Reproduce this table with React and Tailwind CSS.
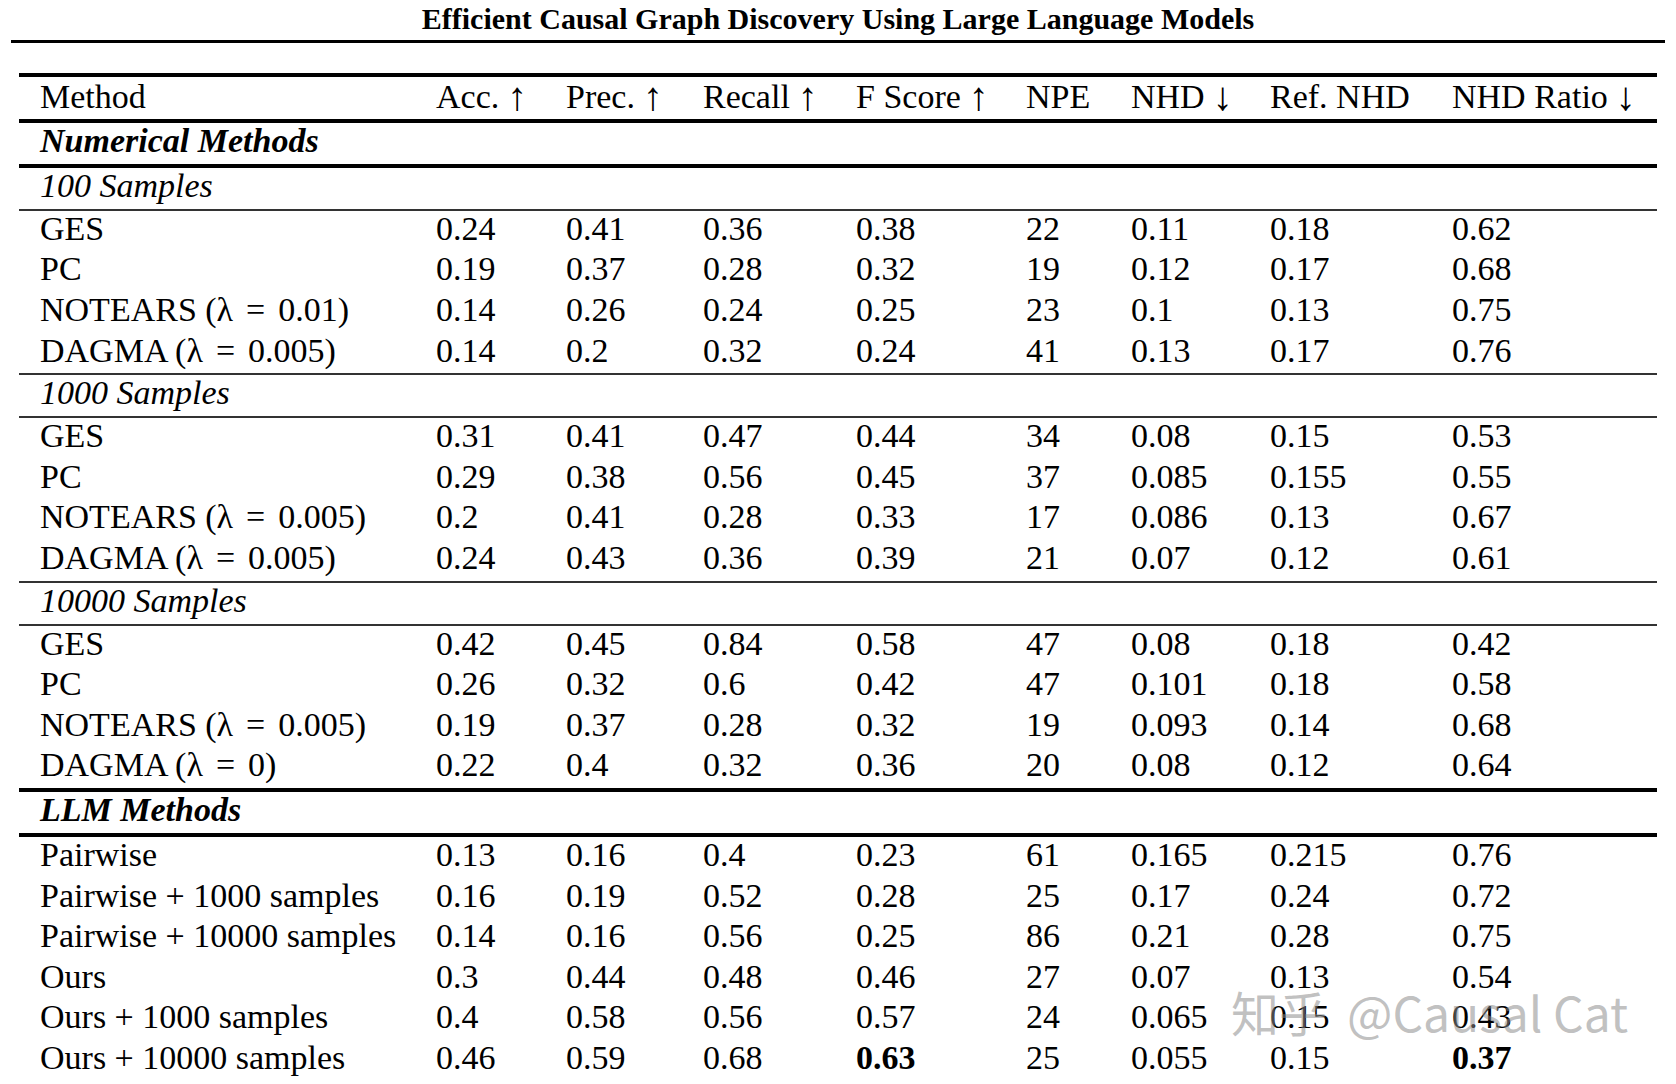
import React from 'react';

const COLS = 'grid grid-cols-[396px_130px_137px_153px_170px_105px_139px_182px_223px]';

const UP = '↑';
const DOWN = '↓';
const HEAD = [
  ['Method'], ['Acc.', UP], ['Prec.', UP], ['Recall', UP], ['F Score', UP],
  ['NPE'], ['NHD', DOWN], ['Ref. NHD'], ['NHD Ratio', DOWN],
];

const lam = (name, v) => (
  <>
    {name} (λ<span className="mx-[13px]">=</span>{v})
  </>
);

const GROUPS = [
  {
    title: '100 Samples',
    rows: [
      ['GES', '0.24', '0.41', '0.36', '0.38', '22', '0.11', '0.18', '0.62'],
      ['PC', '0.19', '0.37', '0.28', '0.32', '19', '0.12', '0.17', '0.68'],
      [lam('NOTEARS', '0.01'), '0.14', '0.26', '0.24', '0.25', '23', '0.1', '0.13', '0.75'],
      [lam('DAGMA', '0.005'), '0.14', '0.2', '0.32', '0.24', '41', '0.13', '0.17', '0.76'],
    ],
  },
  {
    title: '1000 Samples',
    rows: [
      ['GES', '0.31', '0.41', '0.47', '0.44', '34', '0.08', '0.15', '0.53'],
      ['PC', '0.29', '0.38', '0.56', '0.45', '37', '0.085', '0.155', '0.55'],
      [lam('NOTEARS', '0.005'), '0.2', '0.41', '0.28', '0.33', '17', '0.086', '0.13', '0.67'],
      [lam('DAGMA', '0.005'), '0.24', '0.43', '0.36', '0.39', '21', '0.07', '0.12', '0.61'],
    ],
  },
  {
    title: '10000 Samples',
    rows: [
      ['GES', '0.42', '0.45', '0.84', '0.58', '47', '0.08', '0.18', '0.42'],
      ['PC', '0.26', '0.32', '0.6', '0.42', '47', '0.101', '0.18', '0.58'],
      [lam('NOTEARS', '0.005'), '0.19', '0.37', '0.28', '0.32', '19', '0.093', '0.14', '0.68'],
      [lam('DAGMA', '0'), '0.22', '0.4', '0.32', '0.36', '20', '0.08', '0.12', '0.64'],
    ],
  },
];

const LLM = [
  ['Pairwise', '0.13', '0.16', '0.4', '0.23', '61', '0.165', '0.215', '0.76'],
  ['Pairwise + 1000 samples', '0.16', '0.19', '0.52', '0.28', '25', '0.17', '0.24', '0.72'],
  ['Pairwise + 10000 samples', '0.14', '0.16', '0.56', '0.25', '86', '0.21', '0.28', '0.75'],
  ['Ours', '0.3', '0.44', '0.48', '0.46', '27', '0.07', '0.13', '0.54'],
  ['Ours + 1000 samples', '0.4', '0.58', '0.56', '0.57', '24', '0.065', '0.15', '0.43'],
  ['Ours + 10000 samples', '0.46', '0.59', '0.68', '0.63', '25', '0.055', '0.15', '0.37'],
];

// best results, set in bold
const BOLD = { 'l5-4': true, 'l5-8': true };

function Row({ cells, rowKey }) {
  return (
    <div className={`${COLS} h-[40.6px] items-center pb-[5px]`}>
      {cells.map((c, i) => (
        <div key={i} className={`pl-[21px] whitespace-nowrap ${BOLD[`${rowKey}-${i}`] ? 'font-bold' : ''}`}>
          {c}
        </div>
      ))}
    </div>
  );
}

function Caption({ children, bold }) {
  return (
    <div className={`h-[41px] flex items-center pb-[5px] pl-[21px] italic ${bold ? 'font-bold' : ''}`}>{children}</div>
  );
}

export default function App() {
  return (
    <div className="relative w-[1676px] h-[1084px] overflow-hidden bg-white text-black font-['Liberation_Serif','Times_New_Roman',serif]">
      <div className="h-[40px] flex items-center justify-center pb-[2px] text-[30px] font-bold leading-none">
        Efficient Causal Graph Discovery Using Large Language Models
      </div>
      <div className="mx-[11px] border-t-[3px] border-black" />

      <div className="mx-[19px] mt-[30px] text-[34px] leading-none">
        <div className="border-t-4 border-black" />
        <div className={`${COLS} h-[42px] items-center pb-[5px]`}>
          {HEAD.map(([h, arrow]) => (
            <div key={h} className="pl-[21px] whitespace-nowrap flex items-center">
              {h}
              {arrow && <span className="ml-[8px] text-[40px] leading-none">{arrow}</span>}
            </div>
          ))}
        </div>
        <div className="border-t-4 border-black" />
        <Caption bold>Numerical Methods</Caption>
        <div className="border-t-4 border-black" />

        {GROUPS.map((g, gi) => (
          <React.Fragment key={g.title}>
            <Caption>{g.title}</Caption>
            <div className="border-t-2 border-[#333]" />
            {g.rows.map((r, ri) => (
              <Row key={ri} cells={r} rowKey={`g${gi}-${ri}`} />
            ))}
            <div className={gi === 2 ? 'border-t-4 border-black' : 'border-t-2 border-[#333]'} />
          </React.Fragment>
        ))}

        <Caption bold>LLM Methods</Caption>
        <div className="border-t-4 border-black" />
        {LLM.map((r, ri) => (
          <Row key={ri} cells={r} rowKey={`l${ri}`} />
        ))}
      </div>

      {/* watermark */}
      <div className="absolute left-[1231px] top-[987px] flex items-center gap-[20px] text-[48px] leading-none text-[rgba(140,140,140,0.55)] font-['Noto_Sans_CJK_SC','Noto_Sans',sans-serif]">
        <span>知乎</span>
        <span>@Causal Cat</span>
      </div>
    </div>
  );
}
